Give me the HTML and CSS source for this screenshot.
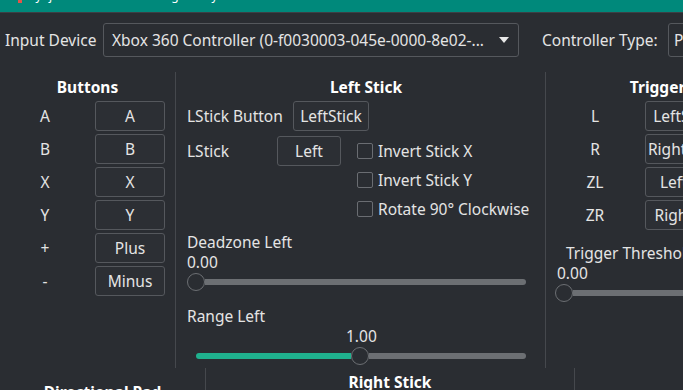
FILE: index.html
```html
<!DOCTYPE html>
<html lang="en">

<head>
  <meta charset="UTF-8" />
  <meta name="viewport" content="width=device-width, initial-scale=1.0" />
  <title>Controller Settings</title>
  <link rel="stylesheet" href="styles.css">
</head>

<body>
  <header class="titlebar">
    <span class="app-icon"></span>
    <span class="title-text">Ryujinx - Controller Settings - Player 1</span>
  </header>

  <div class="device-row">
    <span class="field-label">Input Device</span>
    <div class="combo device-combo">
      <span>Xbox 360 Controller (0-f0030003-045e-0000-8e02-...</span>
      <svg class="arrow" width="10" height="6" viewBox="0 0 10 6"><path d="M0 0h10L5 6z" fill="#e8e8e8"/></svg>
    </div>
    <span class="field-label type-label">Controller Type:</span>
    <div class="combo type-combo"><span>Pro Controller</span></div>
  </div>

  <main class="panels">
    <!-- Buttons -->
    <section class="panel buttons-panel">
      <h3>Buttons</h3>
      <div class="map-grid">
        <span>A</span><button class="btn">A</button>
        <span>B</span><button class="btn">B</button>
        <span>X</span><button class="btn">X</button>
        <span>Y</span><button class="btn">Y</button>
        <span>+</span><button class="btn">Plus</button>
        <span>-</span><button class="btn">Minus</button>
      </div>
    </section>

    <!-- Left stick -->
    <section class="panel stick-panel">
      <h3>Left Stick</h3>
      <div class="stick-row">
        <span class="stick-label">LStick Button</span>
        <button class="btn btn-auto">LeftStick</button>
      </div>
      <div class="stick-row stick-row-two">
        <span class="stick-label short">LStick</span>
        <button class="btn btn-left">Left</button>
        <div class="checks">
          <label class="check"><span class="box"></span>Invert Stick X</label>
          <label class="check"><span class="box"></span>Invert Stick Y</label>
          <label class="check"><span class="box"></span>Rotate 90° Clockwise</label>
        </div>
      </div>

      <div class="slider-label deadzone">Deadzone Left</div>
      <div class="slider-label">0.00</div>
      <div class="slider">
        <span class="knob"></span>
        <span class="rest"></span>
      </div>

      <div class="slider-label range">Range Left</div>
      <div class="slider-label value-mid">1.00</div>
      <div class="slider slider-filled">
        <span class="fill" style="width: 155px"></span>
        <span class="knob"></span>
        <span class="rest"></span>
      </div>
    </section>

    <!-- Triggers -->
    <section class="panel trigger-panel">
      <h3>Triggers</h3>
      <div class="map-grid trigger-grid">
        <span>L</span><button class="btn">LeftShoulder</button>
        <span>R</span><button class="btn">RightShoulder</button>
        <span>ZL</span><button class="btn">LeftTrigger</button>
        <span>ZR</span><button class="btn">RightTrigger</button>
      </div>
      <div class="slider-label threshold">Trigger Threshold</div>
      <div class="slider-label threshold-value">0.00</div>
      <div class="slider trigger-slider">
        <span class="knob"></span>
        <span class="rest"></span>
      </div>
    </section>
  </main>

  <div class="panels bottom-panels">
    <section class="panel dpad-panel">
      <h3>Directional Pad</h3>
    </section>
    <section class="panel rstick-panel">
      <h3>Right Stick</h3>
    </section>
    <section class="panel"></section>
  </div>
</body>

</html>
```

FILE: styles.css
```css
body {
  margin: 0;
  background-color: #2a2d32;
  color: #e4e4e4;
  font-family: "Noto Sans", "Open Sans", sans-serif;
  font-size: 15.5px;
  line-height: 20px;
  overflow: hidden;
  height: 390px;
}

.titlebar {
  height: 12px;
  background-color: #00897b;
  border-bottom: 1px solid #3d4045;
  display: flex;
  overflow: hidden;
  color: #ffffff;
  font-size: 12px;
  line-height: 12px;
}

.app-icon {
  width: 4px;
  height: 3px;
  margin-left: 18px;
  background-color: #e2544a;
}

.title-text {
  margin-top: -10px;
  margin-left: 6px;
}

.device-row {
  display: flex;
  align-items: center;
  margin-top: 10px;
  padding-left: 5px;
  white-space: nowrap;
}

.field-label {
  width: 98px;
  flex-shrink: 0;
}

.type-label {
  width: 126px;
  margin-left: 23px;
}

.combo {
  height: 32px;
  border: 1px solid #55585d;
  border-radius: 3px;
  display: flex;
  align-items: center;
  padding: 0 8px;
  box-sizing: content-box;
  flex-shrink: 0;
}

.device-combo {
  width: 398px;
  justify-content: space-between;
}

.type-combo {
  width: 120px;
  padding-left: 5px;
}

.arrow {
  margin-right: 1px;
}

.panels {
  display: grid;
  grid-template-columns: 175px 370px 228px;
  margin-top: 15px;
  height: 296px;
}

.panel {
  border-left: 1px solid #45484d;
  padding-top: 5px;
  box-sizing: border-box;
  white-space: nowrap;
}

.panel:first-child {
  border-left: none;
}

.panel h3 {
  margin: 0 0 4px;
  font-size: 15.5px;
  line-height: 20px;
  text-align: center;
  color: #ffffff;
}

.map-grid {
  display: grid;
  grid-template-columns: 90px 70px;
  column-gap: 5px;
  row-gap: 3px;
}

.map-grid span {
  text-align: center;
  line-height: 30px;
}

.btn {
  height: 30px;
  background-color: #2c2f34;
  border: 1px solid #55585d;
  border-radius: 3px;
  color: #e4e4e4;
  font-family: inherit;
  font-size: 15.5px;
  padding: 0;
  white-space: nowrap;
  overflow: hidden;
  flex-shrink: 0;
}

/* left stick */
.stick-panel {
  padding-left: 11px;
}

.stick-row {
  display: flex;
  align-items: center;
}

.stick-label {
  width: 106px;
  line-height: 30px;
  flex-shrink: 0;
}

.stick-label.short {
  width: 90px;
}

.btn-auto {
  width: 76px;
}

.stick-row-two {
  margin-top: 5px;
  align-items: flex-start;
}

.btn-left {
  width: 64px;
}

.checks {
  margin-left: 16px;
  display: flex;
  flex-direction: column;
  flex-shrink: 0;
}

.check {
  height: 29px;
  display: flex;
  align-items: center;
  gap: 5px;
}

.box {
  width: 14px;
  height: 14px;
  border: 1px solid #6a6d72;
  border-radius: 2px;
}

.slider-label {
  line-height: 20px;
}

.deadzone {
  margin-top: 9px;
}

.range {
  margin-top: 14px;
}

.value-mid {
  padding-left: 159px;
}

.slider {
  display: flex;
  align-items: center;
  width: 339px;
  height: 20px;
}

.slider-filled {
  padding-left: 9px;
  box-sizing: border-box;
}

.fill {
  height: 6px;
  background-color: #1fb18e;
  border-radius: 3px 0 0 3px;
}

.knob {
  width: 16px;
  height: 16px;
  border: 1.5px solid #6c6f73;
  border-radius: 50%;
  background-color: #2a2d32;
  flex-shrink: 0;
}

.rest {
  flex: 1;
  height: 6px;
  background-color: #6c6f73;
  border-radius: 0 3px 3px 0;
}

/* triggers */
.trigger-panel {
  padding-left: 4px;
}

.trigger-grid {
  grid-template-columns: 90px 110px;
}

.threshold {
  margin-top: 13px;
  padding-left: 16px;
}

.threshold-value {
  padding-left: 7px;
}

.trigger-slider {
  margin-left: 5px;
  width: 200px;
}

/* bottom row */
.bottom-panels {
  grid-template-columns: 205px 369px 200px;
  margin-top: 0;
  height: 40px;
}

.bottom-panels .panel {
  padding-top: 0;
}

.rstick-panel h3 {
  margin-top: 4px;
}

.dpad-panel h3 {
  margin-top: 14px;
}
```
